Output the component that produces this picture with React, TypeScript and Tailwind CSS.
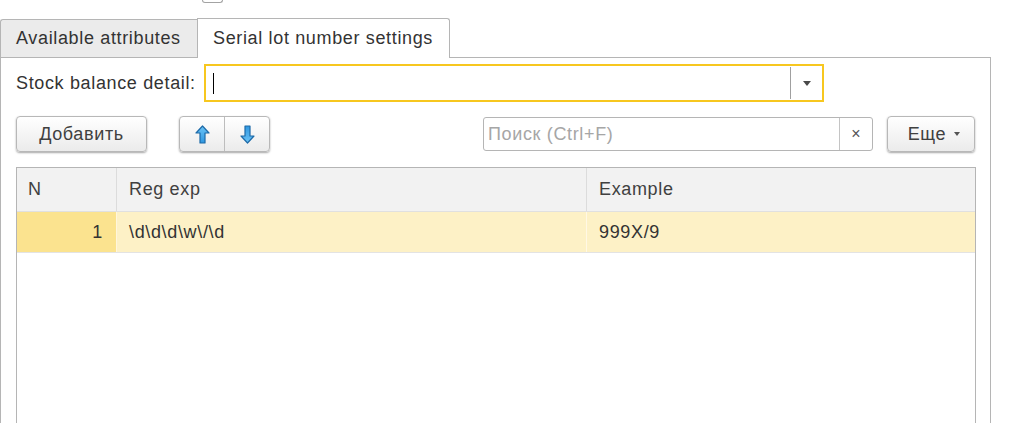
import React from "react";

function ArrowIcon({ down = false }: { down?: boolean }) {
  return (
    <svg width="15" height="19" viewBox="0 0 15 19" className={down ? "rotate-180" : ""}>
      <defs>
        <linearGradient id={down ? "gd" : "gu"} x1="0" y1="0" x2="0" y2="1">
          <stop offset="0" stopColor="#6cc4f7" />
          <stop offset="1" stopColor="#2f97e0" />
        </linearGradient>
      </defs>
      <path
        d="M7.5 1 L14 8 L10 8 L10 18 L5 18 L5 8 L1 8 Z"
        fill={`url(#${down ? "gd" : "gu"})`}
        stroke="#1d6aa8"
        strokeWidth="1.2"
        strokeLinejoin="round"
      />
    </svg>
  );
}

export default function App() {
  return (
    <div className="w-[1011px] h-[423px] overflow-hidden bg-white font-['Liberation_Sans',Arial,sans-serif] text-[18px] tracking-[0.65px] text-[#333]">
      {/* bit of a checkbox above */}
      <div className="h-[18px] pl-[202px]">
        <div className="w-[21px] h-[3px] border-x border-b border-[#a3a3a3] rounded-b-[3px]" />
      </div>

      {/* Tabs */}
      <div className="flex items-end h-[39px]">
        <div className="w-[197px] h-[38px] bg-[#ebebeb] border border-r-0 border-b-0 border-[#b5b5b5] rounded-tl-[3px] pl-[15px] flex items-center">
          Available attributes
        </div>
        <div className="relative z-10 w-[253px] h-[40px] -mb-px bg-white border border-b-0 border-[#b5b5b5] rounded-tr-[3px] pl-[15px] flex items-center">
          Serial lot number settings
        </div>
      </div>

      {/* Panel */}
      <div className="w-[991px] h-[380px] border border-[#b5b5b5] pl-[15px] pt-[6px]">
        {/* Stock balance detail */}
        <div className="flex items-center h-[38px]">
          <div className="w-[188px]">Stock balance detail:</div>
          <div className="w-[620px] h-[38px] border-2 border-[#f7c71f] flex">
            <div className="flex-1 flex items-center pl-[7px]">
              <div className="w-px h-[21px] bg-black" />
            </div>
            <div className="my-[1px] w-px bg-[#a0a0a0]" />
            <div className="w-[31px] flex items-center justify-center">
              <div className="w-0 h-0 border-x-[4px] border-x-transparent border-t-[5px] border-t-[#4a4a4a]" />
            </div>
          </div>
        </div>

        {/* Toolbar */}
        <div className="flex items-center h-[36px] mt-[14px]">
          <button className="w-[131px] h-[36px] rounded-[4px] border border-[#b8b8b8] bg-linear-to-b from-white to-[#ebebeb] shadow-[0_1px_2px_rgba(0,0,0,0.35)] text-[#404040]">
            Добавить
          </button>
          <div className="ml-[32px] w-[91px] h-[36px] flex rounded-[4px] border border-[#b8b8b8] bg-linear-to-b from-white to-[#ebebeb] shadow-[0_1px_2px_rgba(0,0,0,0.35)]">
            <div className="w-[45px] flex items-center justify-center border-r border-[#bdbdbd]">
              <ArrowIcon />
            </div>
            <div className="flex-1 flex items-center justify-center">
              <ArrowIcon down />
            </div>
          </div>
          <div className="ml-[213px] w-[390px] h-[34px] flex rounded-[3px] border border-[#b5b5b5] bg-white">
            <div className="flex-1 flex items-center pl-[4px] text-[#a6a6a6]">Поиск (Ctrl+F)</div>
            <div className="w-[33px] border-l border-[#c4c4c4] flex items-center justify-center text-[#555] text-[16px] tracking-normal">
              ×
            </div>
          </div>
          <button className="ml-[14px] w-[88px] h-[36px] rounded-[4px] border border-[#b8b8b8] bg-linear-to-b from-white to-[#ebebeb] shadow-[0_1px_2px_rgba(0,0,0,0.35)] text-[#404040] flex items-center justify-center gap-[8px] pl-[6px]">
            <span>Еще</span>
            <span className="w-0 h-0 border-x-[3px] border-x-transparent border-t-[4px] border-t-[#555]" />
          </button>
        </div>

        {/* Table */}
        <div className="mt-[15px] w-[960px] h-[300px] border border-[#b5b5b5]">
          <div className="grid grid-cols-[100px_470px_1fr] h-[44px] bg-[#f2f2f2] border-b border-[#e0e0e0] text-[#404040]">
            <div className="flex items-center pl-[11px] border-r border-[#dcdcdc]">N</div>
            <div className="flex items-center pl-[12px] border-r border-[#dcdcdc]">Reg exp</div>
            <div className="flex items-center pl-[12px]">Example</div>
          </div>
          <div className="grid grid-cols-[100px_470px_1fr] h-[41px] border-b border-[#e3e3e3]">
            <div className="flex items-center justify-end pr-[13px] bg-[#fbe38f] border-r border-[#fff6dc]">1</div>
            <div className="flex items-center pl-[12px] bg-[#fdf1c6] border-r border-[#fff8e4]">\d\d\d\w\/\d</div>
            <div className="flex items-center pl-[12px] bg-[#fdf1c6]">999X/9</div>
          </div>
        </div>
      </div>
    </div>
  );
}
